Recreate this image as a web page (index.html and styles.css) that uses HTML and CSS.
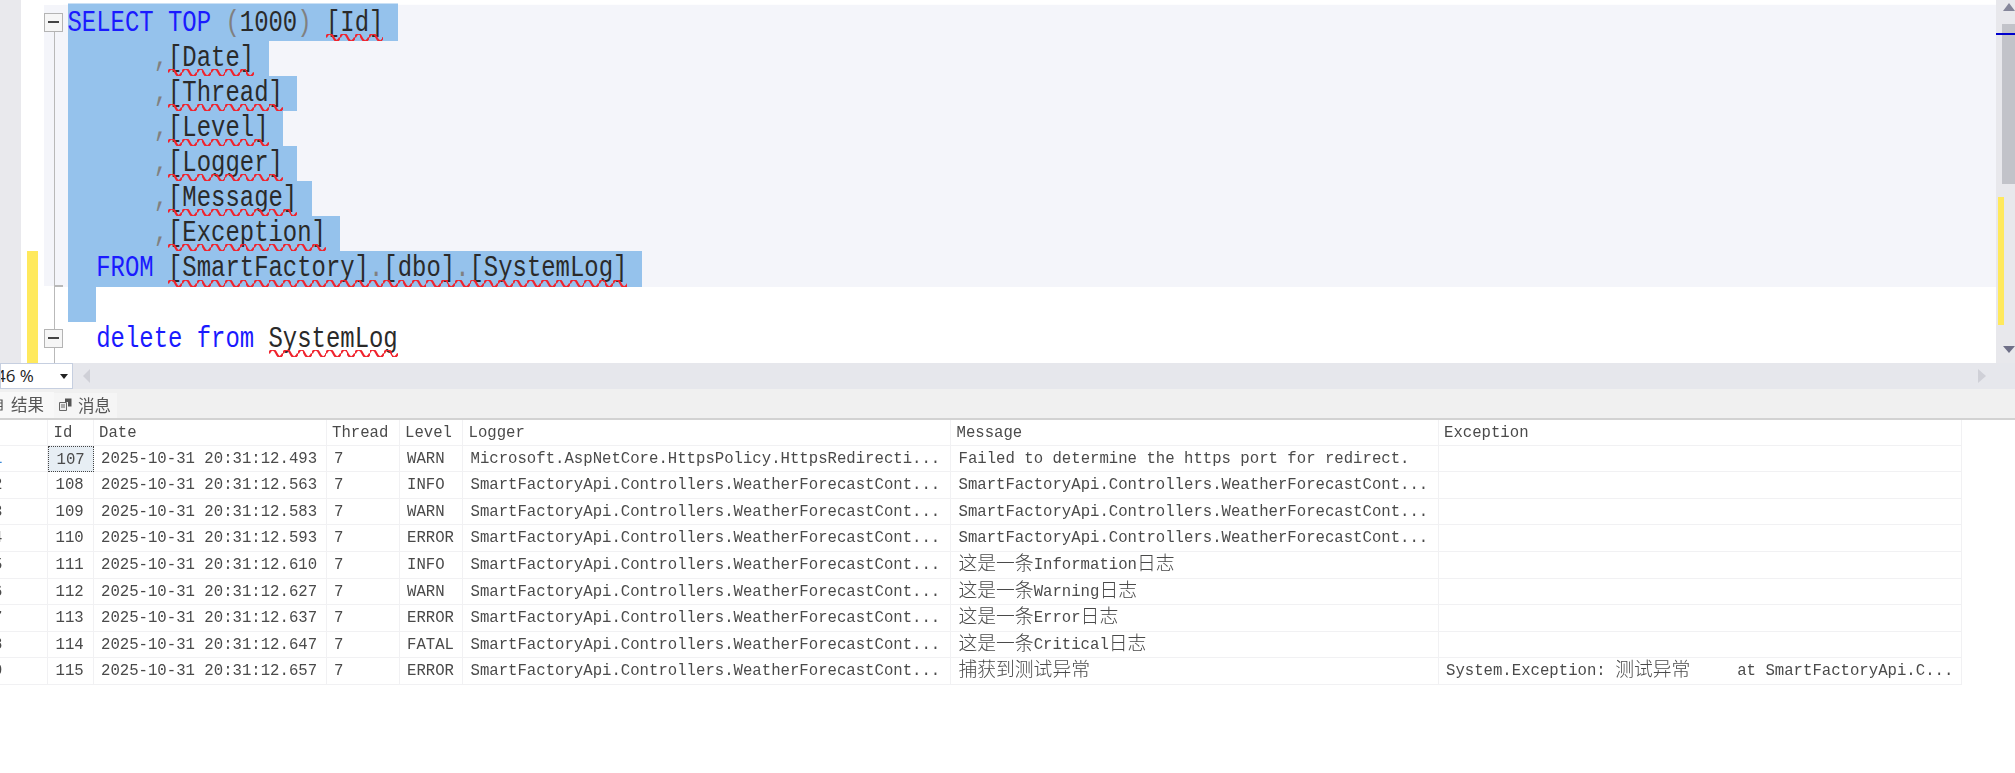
FILE: index.html
```html
<!DOCTYPE html>
<html lang="zh-CN">
<head>
<meta charset="utf-8">
<title>SystemLog</title>
<link rel="stylesheet" href="styles.css">
</head>
<body>
<div class="app">
  <section class="editor">
    <div class="gutter"></div>
    <div class="marks"><div class="mark"></div></div>
    <div class="folds">
      <div class="region"></div>
      <div class="fold-line"></div>
      <div class="fold-tick"></div>
      <div class="fold-box box-a"><span></span></div>
      <div class="fold-box box-b"><span></span></div>
    </div>
    <div class="code">
      <div class="line lit first"><span class="sel"><span class="tok kw">SELECT</span> <span class="tok kw">TOP</span> <span class="tok g">(</span><span class="tok">1000</span><span class="tok g">)</span> <span class="sq"><span class="tok">[Id]</span></span> </span></div>
      <div class="line lit"><span class="sel">      <span class="tok g">,</span><span class="sq"><span class="tok">[Date]</span></span> </span></div>
      <div class="line lit"><span class="sel">      <span class="tok g">,</span><span class="sq"><span class="tok">[Thread]</span></span> </span></div>
      <div class="line lit"><span class="sel">      <span class="tok g">,</span><span class="sq"><span class="tok">[Level]</span></span> </span></div>
      <div class="line lit"><span class="sel">      <span class="tok g">,</span><span class="sq"><span class="tok">[Logger]</span></span> </span></div>
      <div class="line lit"><span class="sel">      <span class="tok g">,</span><span class="sq"><span class="tok">[Message]</span></span> </span></div>
      <div class="line lit"><span class="sel">      <span class="tok g">,</span><span class="sq"><span class="tok">[Exception]</span></span> </span></div>
      <div class="line lit"><span class="sel">  <span class="tok kw">FROM</span> <span class="sq"><span class="tok">[SmartFactory]</span><span class="tok g">.</span><span class="tok">[dbo]</span><span class="tok g">.</span><span class="tok">[SystemLog]</span></span> </span></div>
      <div class="line"><span class="sel">  </span></div>
      <div class="line">  <span class="tok kw">delete</span> <span class="tok kw">from</span> <span class="sq"><span class="tok">SystemLog</span></span></div>
    </div>
    <div class="vscroll">
      <div class="arrow-up"></div>
      <div class="thumb"></div>
      <div class="arrow-down"></div>
      <div class="pos-mark"></div>
      <div class="change-mark"></div>
    </div>
  </section>

  <section class="hbar">
    <div class="zoom-box"><span class="zoom-val">46 %</span><span class="caret"></span></div>
    <div class="tri tri-left"></div>
    <div class="tri tri-right"></div>
  </section>

  <nav class="tabs">
    <div class="tab tab-results">
      <svg class="tab-icon clip" width="12" height="12" viewBox="0 0 12 12"><path d="M1 1h10v10H1zM1 4h10M1 7.500h10M4.500 1v10M8 1v10" fill="none" stroke="#555" stroke-width="1.200"/></svg>
      <span>结果</span>
    </div>
    <div class="tab tab-msgs">
      <svg class="tab-icon" width="13" height="13" viewBox="0 0 13 13"><path d="M.5 4.500h7v8h-7z" fill="#eee" stroke="#666"/><path d="M2 7h4M2 9h4" stroke="#666"/><path d="M6 .5h6.500v8H9V4H6z" fill="#555"/></svg>
      <span>消息</span>
    </div>
  </nav>

  <section class="grid">
    <div class="c h"></div><div class="c h">Id</div><div class="c h">Date</div><div class="c h">Thread</div><div class="c h">Level</div><div class="c h">Logger</div><div class="c h">Message</div><div class="c h">Exception</div>

    <div class="c n cur">1</div><div class="c focus">107</div><div class="c">2025-10-31 20:31:12.493</div><div class="c">7</div><div class="c">WARN</div><div class="c">Microsoft.AspNetCore.HttpsPolicy.HttpsRedirecti...</div><div class="c">Failed to determine the https port for redirect.</div><div class="c"></div>

    <div class="c n">2</div><div class="c">108</div><div class="c">2025-10-31 20:31:12.563</div><div class="c">7</div><div class="c">INFO</div><div class="c">SmartFactoryApi.Controllers.WeatherForecastCont...</div><div class="c">SmartFactoryApi.Controllers.WeatherForecastCont...</div><div class="c"></div>

    <div class="c n">3</div><div class="c">109</div><div class="c">2025-10-31 20:31:12.583</div><div class="c">7</div><div class="c">WARN</div><div class="c">SmartFactoryApi.Controllers.WeatherForecastCont...</div><div class="c">SmartFactoryApi.Controllers.WeatherForecastCont...</div><div class="c"></div>

    <div class="c n">4</div><div class="c">110</div><div class="c">2025-10-31 20:31:12.593</div><div class="c">7</div><div class="c">ERROR</div><div class="c">SmartFactoryApi.Controllers.WeatherForecastCont...</div><div class="c">SmartFactoryApi.Controllers.WeatherForecastCont...</div><div class="c"></div>

    <div class="c n">5</div><div class="c">111</div><div class="c">2025-10-31 20:31:12.610</div><div class="c">7</div><div class="c">INFO</div><div class="c">SmartFactoryApi.Controllers.WeatherForecastCont...</div><div class="c"><span class="zh">这是一条</span>Information<span class="zh">日志</span></div><div class="c"></div>

    <div class="c n">6</div><div class="c">112</div><div class="c">2025-10-31 20:31:12.627</div><div class="c">7</div><div class="c">WARN</div><div class="c">SmartFactoryApi.Controllers.WeatherForecastCont...</div><div class="c"><span class="zh">这是一条</span>Warning<span class="zh">日志</span></div><div class="c"></div>

    <div class="c n">7</div><div class="c">113</div><div class="c">2025-10-31 20:31:12.637</div><div class="c">7</div><div class="c">ERROR</div><div class="c">SmartFactoryApi.Controllers.WeatherForecastCont...</div><div class="c"><span class="zh">这是一条</span>Error<span class="zh">日志</span></div><div class="c"></div>

    <div class="c n">8</div><div class="c">114</div><div class="c">2025-10-31 20:31:12.647</div><div class="c">7</div><div class="c">FATAL</div><div class="c">SmartFactoryApi.Controllers.WeatherForecastCont...</div><div class="c"><span class="zh">这是一条</span>Critical<span class="zh">日志</span></div><div class="c"></div>

    <div class="c n">9</div><div class="c">115</div><div class="c">2025-10-31 20:31:12.657</div><div class="c">7</div><div class="c">ERROR</div><div class="c">SmartFactoryApi.Controllers.WeatherForecastCont...</div><div class="c"><span class="zh">捕获到测试异常</span></div><div class="c">System.Exception: <span class="zh">测试异常</span>     at SmartFactoryApi.C...</div>
  </section>
</div>
</body>
</html>
```
FILE: styles.css
```css
* { box-sizing: border-box; }
html, body { margin: 0; padding: 0; background: #fff; }
body { width: 2015px; height: 773px; overflow: hidden; }
.app { width: 2015px; height: 773px; overflow: hidden; filter: blur(0.45px); }

/* editor */
.editor { display: flex; height: 363px; background: #fff; }
.gutter { width: 21px; background: #e9e9ed; }
.marks { width: 22.5px; padding: 251px 5.5px 0 6px; }
.mark { height: 112px; background: #ffe95c; }
.folds { width: 19.5px; position: relative; padding-top: 4.5px; }
.region { height: 281.5px; background: #f4f5fa; }
.fold-line { position: absolute; left: 10px; top: 20px; bottom: 0; width: 1.5px; background: #b9b9b9; }
.fold-tick { position: absolute; left: 10px; top: 285px; width: 9.5px; height: 1.5px; background: #b9b9b9; }
.fold-box { position: absolute; left: 0; width: 19.5px; height: 19px; background: #f6f6f6; border: 1.5px solid #b4b4b4; }
.fold-box span { position: absolute; left: 3px; right: 3px; top: 7px; height: 2px; background: #444; }
.box-a { top: 12.5px; }
.box-b { top: 329px; }

.code {
  width: 1932.5px;
  padding-top: 5.6px;
  font-family: "Liberation Mono", monospace;
  font-size: 23.93px;
  line-height: 35.13px;
  color: #2a2a2a;
}
.line { height: 35.13px; padding-left: 4.500px; white-space: pre; }
.lit { background: #f4f5fa; }
.first { box-shadow: 0 -1.2px 0 #f4f5fa; }
.sel { display: inline-block; height: 35.13px; vertical-align: top; background: #95c2ec; }
.first .sel { box-shadow: 0 -2.5px 0 #95c2ec; }
.tok { display: inline-block; transform: scaleY(1.22); }
.kw { color: #1a1aff; }
.g { color: #808080; }
.sq { position: relative; display: inline-block; }
.sq::after {
  content: "";
  position: absolute;
  left: 0; right: 0; bottom: 0;
  height: 7px;
  background: url("data:image/svg+xml,%3Csvg xmlns='http://www.w3.org/2000/svg' width='14.360' height='7' viewBox='0 0 14.360 7'%3E%3Cpath d='M0 3.500C2 -1.500 5 -1.500 7.180 3.500S12 8.500 14.360 3.500' fill='none' stroke='%23f0232d' stroke-width='2'/%3E%3C/svg%3E") repeat-x left top / 14.36px 7px;
}

/* vertical scrollbar */
.vscroll { position: relative; width: 19px; margin-left: 0.500px; background: #e8e8ec; }
.thumb { position: absolute; left: 6px; right: 0; top: 24px; height: 160px; background: #c2c3c9; }
.arrow-up, .arrow-down { position: absolute; left: 7px; width: 0; height: 0; border-left: 6px solid transparent; border-right: 6px solid transparent; }
.arrow-up { top: 3px; border-bottom: 8px solid #85869a; }
.arrow-down { top: 346px; border-top: 7px solid #6f7088; }
.pos-mark { position: absolute; left: 0; right: 0; top: 32.500px; height: 2.500px; background: #0000cd; }
.change-mark { position: absolute; left: 1.500px; width: 6.500px; top: 197px; height: 128px; background: #ffe95c; }

/* zoom + horizontal bar */
.hbar { position: relative; height: 26px; background: #e6e7ec; }
.zoom-box { position: relative; width: 73px; height: 26px; background: #fff; border: 1px solid #c6cfe0; font: 17px "Open Sans", "Liberation Sans", sans-serif; color: #222; line-height: 24px; overflow: hidden; }
.zoom-val { position: absolute; left: -5px; top: 0; }
.caret { position: absolute; right: 4px; top: 10px; width: 0; height: 0; border-left: 4.500px solid transparent; border-right: 4.500px solid transparent; border-top: 5px solid #222; }
.tri { position: absolute; top: 6px; width: 0; height: 0; border-top: 7px solid transparent; border-bottom: 7px solid transparent; }
.tri-left { left: 83px; border-right: 7px solid #cfd0d7; }
.tri-right { left: 1978px; border-left: 8px solid #cfd0d7; }

/* tabs */
.tabs { display: flex; align-items: flex-end; height: 31px; background: #f0f0f0; border-bottom: 2px solid #d2d2d2; }
.tab { display: flex; align-items: center; height: 26px; padding-bottom: 2px; font: 16.500px "Noto Sans CJK SC", sans-serif; color: #555; background: #f8f8f8; }
.tab-results { width: 54px; padding-left: 11px; position: relative; overflow: hidden; }
.tab-icon.clip { position: absolute; left: -9px; top: 7px; }
.tab-msgs { width: 63px; padding-left: 5px; gap: 6px; background: #f5f5f5; margin-left: 0; height: 25px; }

/* results grid */
.grid {
  display: grid;
  grid-template-columns: 48px 45.5px 233px 73px 63.5px 488px 487.5px 523.5px;
  grid-template-rows: 25.6px repeat(9, 26.6px);
  width: 1961.5px;
  font-family: "Liberation Mono", monospace;
  font-size: 15.67px;
  color: #4a4a4a;
}
.c {
  padding-left: 7.500px;
  line-height: 27px;
  white-space: pre;
  overflow: hidden;
  border-right: 1.5px solid #f1f1f3;
  border-bottom: 1.5px solid #f1f1f3;
}
.h { padding-left: 5.500px; line-height: 26px; }
.n { padding-left: 0; text-indent: -7px; border-right-width: 1.5px; }
.cur { color: #3d8ad8; }
.focus { background: #e7eef4; border: 1px dotted #444; }
.zh { font-family: "Noto Sans CJK SC", sans-serif; font-size: 18.8px; line-height: 0; font-weight: 300; vertical-align: -1px; }
```
